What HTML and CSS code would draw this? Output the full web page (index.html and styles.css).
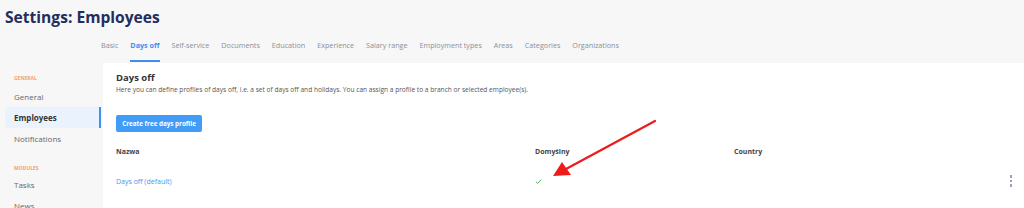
FILE: index.html
```html
<!DOCTYPE html>
<html lang="en">
<head>
<meta charset="utf-8">
<title>Settings: Employees</title>
<link rel="stylesheet" href="styles.css">
</head>
<body>
<header class="header">
  <h1 class="page-title">Settings: Employees</h1>
  <nav class="tabs">
    <a class="tab">Basic</a>
    <a class="tab active">Days off</a>
    <a class="tab">Self-service</a>
    <a class="tab">Documents</a>
    <a class="tab">Education</a>
    <a class="tab">Experience</a>
    <a class="tab">Salary range</a>
    <a class="tab">Employment types</a>
    <a class="tab">Areas</a>
    <a class="tab">Categories</a>
    <a class="tab">Organizations</a>
  </nav>
</header>
<div class="layout">
  <aside class="sidebar">
    <div class="side-label">GENERAL</div>
    <a class="side-item">General</a>
    <a class="side-item active">Employees</a>
    <a class="side-item">Notifications</a>
    <div class="side-label modules">MODULES</div>
    <a class="side-item">Tasks</a>
    <a class="side-item">News</a>
  </aside>
  <main class="panel">
    <h2 class="panel-title">Days off</h2>
    <p class="panel-desc">Here you can define profiles of days off, i.e. a set of days off and holidays. You can assign a profile to a branch or selected employee(s).</p>
    <button class="btn">Create free days profile</button>
    <div class="table">
      <div class="th">Nazwa</div>
      <div class="th">Domyśiny</div>
      <div class="th">Country</div>
      <div class="th"></div>
      <div class="td"><a class="link">Days off (default)</a></div>
      <div class="td"><svg class="check" viewBox="0 0 8 6" width="7" height="5"><path d="M0.8 3.2 L3 5.2 L7.2 0.8" fill="none" stroke="#4caf50" stroke-width="1.2"/></svg></div>
      <div class="td"></div>
      <div class="td kebab"><span></span><span></span><span></span></div>
    </div>
  </main>
</div>
<svg class="annot" width="1024" height="208" viewBox="0 0 1024 208">
  <line x1="655" y1="121" x2="566" y2="169" stroke="#ec1c1c" stroke-width="2.2" stroke-linecap="round"/>
  <polygon points="553,176 562,162 571,175" fill="#ec1c1c"/>
</svg>
</body>
</html>
```
FILE: styles.css
```css
* { box-sizing: border-box; }
html, body { margin: 0; padding: 0; }
body {
  font-family: "Open Sans", "Noto Sans", sans-serif;
  background: #f7f7f7;
  width: 1024px;
  height: 208px;
  overflow: hidden;
  position: relative;
}
.header { display: flex; flex-direction: column; }
.page-title {
  margin: 0;
  padding: 7px 0 0 5px;
  height: 36px;
  font-size: 15.6px;
  font-weight: 700;
  color: #232d5f;
  line-height: 20px;
}
.tabs {
  display: flex;
  gap: 12px;
  padding-left: 101px;
  height: 27px;
}
.tab {
  font-size: 7.2px;
  color: #8b9099;
  line-height: 11px;
  padding-top: 3.5px;
  border-bottom: 2px solid transparent;
  height: 26px;
}
.tab.active {
  color: #3f8ef0;
  font-weight: 700;
  border-bottom-color: #3f8ef0;
}
.layout {
  display: grid;
  grid-template-columns: 103px 1fr;
  height: 145px;
}
.sidebar {
  display: flex;
  flex-direction: column;
  padding-top: 10.5px;
}
.side-label {
  font-size: 5px;
  font-weight: 700;
  color: #f5a06a;
  padding-left: 14px;
  height: 8px;
  line-height: 8px;
  margin-bottom: 4.5px;
}
.side-label.modules { margin-top: 15px; margin-bottom: 2px; }
.side-item {
  font-size: 8px;
  color: #666;
  height: 21px;
  line-height: 21px;
  margin-left: 5px;
  width: 96px;
  padding-left: 9px;
  border-radius: 3px 0 0 3px;
}
.side-item.active {
  background: #e9f2fd;
  color: #333;
  font-weight: 700;
  border-right: 2px solid #3f8ef0;
}
.panel {
  background: #fff;
  padding: 8px 13px 0 13px;
}
.panel-title {
  margin: 0;
  font-size: 9.5px;
  font-weight: 700;
  color: #333;
  line-height: 13px;
}
.panel-desc {
  margin: 0;
  font-size: 6.6px;
  color: #555;
  line-height: 11px;
}
.btn {
  margin-top: 20px;
  display: block;
  width: 86px;
  height: 17px;
  border: 0;
  border-radius: 2px;
  background: #409cf7;
  color: #fff;
  font-family: inherit;
  font-size: 6.3px;
  font-weight: 700;
  padding: 0;
}
.table {
  display: grid;
  grid-template-columns: 419px 199px 1fr auto;
  grid-template-rows: 20px 40px;
  margin-top: 10px;
}
.th {
  font-size: 7px;
  font-weight: 700;
  color: #444;
  line-height: 20px;
}
.td {
  display: flex;
  align-items: center;
  font-size: 7px;
  padding-bottom: 2px;
}
.link { color: #4b94f2; }
.check { display: block; }
.kebab {
  flex-direction: column;
  justify-content: center;
  gap: 2px;
  margin-right: -1px;
}
.kebab span {
  display: block;
  width: 2.5px;
  height: 2.5px;
  background: #98a3bb;
}
.annot {
  position: absolute;
  left: 0;
  top: 0;
  pointer-events: none;
}
```
